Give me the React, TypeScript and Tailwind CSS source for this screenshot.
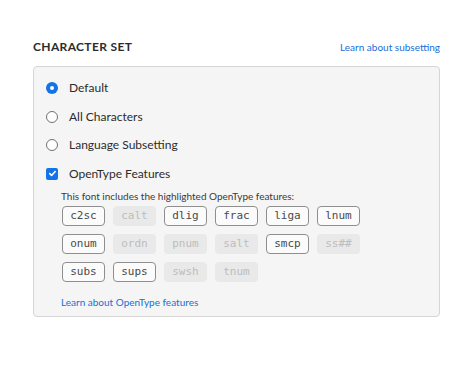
type Feature = { name: string; on: boolean };

const features: Feature[] = [
  { name: 'c2sc', on: true },
  { name: 'calt', on: false },
  { name: 'dlig', on: true },
  { name: 'frac', on: true },
  { name: 'liga', on: true },
  { name: 'lnum', on: true },
  { name: 'onum', on: true },
  { name: 'ordn', on: false },
  { name: 'pnum', on: false },
  { name: 'salt', on: false },
  { name: 'smcp', on: true },
  { name: 'ss##', on: false },
  { name: 'subs', on: true },
  { name: 'sups', on: true },
  { name: 'swsh', on: false },
  { name: 'tnum', on: false },
];

function Radio({ label, checked }: { label: string; checked?: boolean }) {
  return (
    <label className="flex items-center h-[28.5px] gap-[11px]">
      {checked ? (
        <span className="w-[12px] h-[12px] rounded-full bg-[#1473e6] flex items-center justify-center">
          <span className="w-[4px] h-[4px] rounded-full bg-white" />
        </span>
      ) : (
        <span className="w-[12px] h-[12px] rounded-full border-[1.5px] border-[#707070] bg-white" />
      )}
      <span className="text-[12px] text-[#2c2c2c]">{label}</span>
    </label>
  );
}

export default function App() {
  return (
    <div
      className="bg-white w-[474px] h-[370px] pt-[39px] pl-[33px] pr-[34px]"
      style={{ fontFamily: 'Lato, "Open Sans", sans-serif' }}
    >
      <div className="flex items-center justify-between h-4">
        <h2 className="text-[12px] font-bold tracking-[0.35px] text-[#2c2c2c]">CHARACTER SET</h2>
        <a className="text-[10px] text-[#1a6ed8]">Learn about subsetting</a>
      </div>

      <div className="mt-[11px] border border-[#d6d6d6] rounded-[4px] bg-[#f5f5f5] pt-[7px] pb-[7px] pl-[12px]">
        <Radio label="Default" checked />
        <Radio label="All Characters" />
        <Radio label="Language Subsetting" />
        <label className="flex items-center h-[28.5px] gap-[11px]">
          <span className="w-[12px] h-[12px] rounded-[2px] bg-[#1473e6] flex items-center justify-center">
            <svg width="9" height="9" viewBox="0 0 10 10" fill="none">
              <path d="M2 5.2l2 2 4-4.4" stroke="white" strokeWidth="1.8" strokeLinecap="round" strokeLinejoin="round" />
            </svg>
          </span>
          <span className="text-[12px] text-[#2c2c2c]">OpenType Features</span>
        </label>

        <div className="pl-[15px]">
          <p className="mt-[1px] h-[14px] leading-[14px] text-[10px] text-[#3a3a3a]">
            This font includes the highlighted OpenType features:
          </p>
          <div className="mt-[3px] grid grid-cols-[repeat(6,43px)] gap-x-[8px] gap-y-[8px] pl-[1px]">
            {features.map((f) => (
              <span
                key={f.name}
                className={
                  f.on
                    ? 'h-[20px] flex items-center justify-center rounded-[4px] border border-[#8e8e8e] bg-[#fbfbfb] text-[#4a4a4a] text-[11px]'
                    : 'h-[20px] flex items-center justify-center rounded-[4px] bg-[#e9e9e9] text-[#bdbdbd] text-[11px]'
                }
                style={{ fontFamily: '"DejaVu Sans Mono", monospace' }}
              >
                {f.name}
              </span>
            ))}
          </div>
          <a className="block mt-[13px] h-[14px] leading-[14px] text-[10px] text-[#1a6ed8]">
            Learn about OpenType features
          </a>
        </div>
      </div>
    </div>
  );
}
